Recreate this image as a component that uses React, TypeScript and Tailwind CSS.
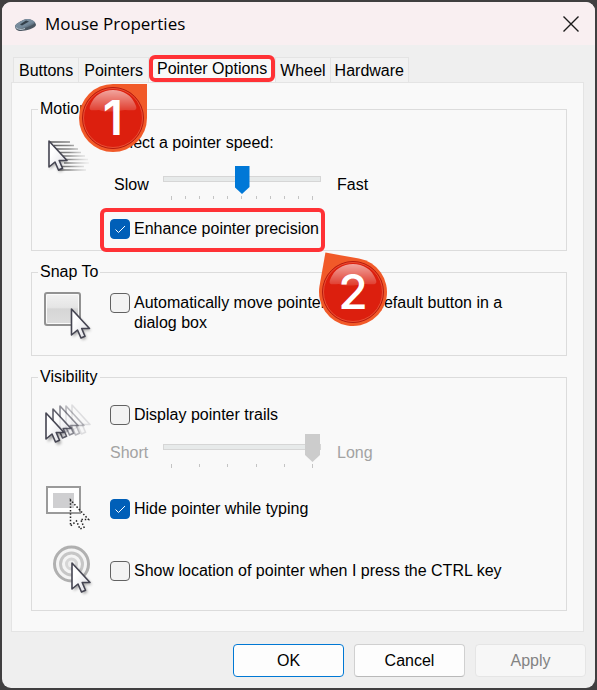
import { useState } from "react";
import type { ReactNode } from "react";
import clsx from "clsx";

const ARROW = "M0 0V26L6 21L9.5 29L13.5 27.3L10.2 19.5H18Z";

const Arrow = ({ x, y, opacity = 1 }: { x: number; y: number; opacity?: number }) => (
  <g transform={`translate(${x} ${y})`} opacity={opacity}>
    <path d={ARROW} fill="url(#arrowFill)" stroke="#454552" strokeWidth="1.6" strokeLinejoin="round" />
  </g>
);

const ArrowShadow = ({ x, y }: { x: number; y: number }) => (
  <path d={ARROW} transform={`translate(${x + 2} ${y + 2})`} fill="#000" opacity="0.35" filter="url(#soft)" />
);

const Icon = ({ children }: { children: ReactNode }) => (
  <svg className="ml-3 h-12 w-12 overflow-visible" viewBox="0 0 48 48" aria-hidden="true">
    {children}
  </svg>
);

const SharedDefs = () => (
  <svg className="absolute h-0 w-0" aria-hidden="true">
    <defs>
      <linearGradient id="arrowFill" x1="0" y1="0" x2="1" y2="1">
        <stop offset="0.3" stopColor="#fff" />
        <stop offset="1" stopColor="#dcdce2" />
      </linearGradient>
      <linearGradient id="buttonFill" x1="0" y1="0" x2="0" y2="1">
        <stop offset="0" stopColor="#f2f2f2" />
        <stop offset="0.45" stopColor="#e5e5e5" />
        <stop offset="0.5" stopColor="#d6d6d6" />
        <stop offset="1" stopColor="#dedede" />
      </linearGradient>
      <linearGradient id="speedFade" gradientUnits="userSpaceOnUse" x1="4" y1="0" x2="46" y2="0">
        <stop offset="0" stopColor="#555" />
        <stop offset="0.5" stopColor="#8a8a8a" />
        <stop offset="1" stopColor="#ddd" stopOpacity="0.3" />
      </linearGradient>
      <linearGradient id="gloss" x1="0" y1="0" x2="0" y2="1">
        <stop offset="0" stopColor="#fff" stopOpacity="0.6" />
        <stop offset="1" stopColor="#fff" stopOpacity="0.12" />
      </linearGradient>
      <linearGradient id="mouseFill" x1="0" y1="0" x2="1" y2="1">
        <stop offset="0" stopColor="#8295a5" />
        <stop offset="0.6" stopColor="#74899a" />
        <stop offset="1" stopColor="#2c353d" />
      </linearGradient>
      <filter id="soft" x="-30%" y="-30%" width="160%" height="160%">
        <feGaussianBlur stdDeviation="1.5" />
      </filter>
    </defs>
  </svg>
);

const MouseIcon = () => (
  <svg className="h-4 w-6" viewBox="0 0 24 16" aria-hidden="true">
    <path d="M2 10C2 8 11 3 14 3C18 3 23 6 23 9C23 12 12 15 8 15C4 15 2 13 2 10Z" fill="#4a5661" />
    <path d="M2 10C2 8 11 3 14 3C18 3 22 5 22 7C20 9 14 12 9 12.500C5 13 2 12 2 10Z" fill="url(#mouseFill)" />
    <path d="M7 8.500L13 4.500L16 5.500L9 9.500Z" fill="#34404a" />
    <path d="M3 11.500C5 14 9 13.500 12 12.500" fill="none" stroke="#b4c2cc" strokeWidth="1.200" />
  </svg>
);

const SpeedIcon = () => (
  <Icon>
    {[
      [5, 26],
      [10, 30],
      [12, 34],
      [14, 37],
      [17, 41],
      [21, 44],
      [20, 45],
      [18, 40],
      [14, 42],
    ].map(([from, to], i) => (
      <path key={i} d={`M${from} ${9 + i * 3.5}H${to}`} stroke="url(#speedFade)" strokeWidth="1.3" />
    ))}
    <ArrowShadow x={4} y={8} />
    <Arrow x={5} y={8} />
  </Icon>
);

const SnapIcon = () => (
  <Icon>
    <rect x="1" y="1" width="35" height="32" rx="2" fill="url(#buttonFill)" stroke="#929292" strokeWidth="2" />
    <rect x="2.500" y="2.500" width="32" height="29" rx="1" fill="none" stroke="#fafafa" />
    <ArrowShadow x={27} y={17} />
    <Arrow x={27.5} y={17} />
  </Icon>
);

const TrailsIcon = () => (
  <Icon>
    <Arrow x={28} y={2} opacity={0.15} />
    <Arrow x={22} y={3} opacity={0.35} />
    <Arrow x={16} y={3} opacity={0.6} />
    <Arrow x={9} y={6} opacity={0.85} />
    <ArrowShadow x={2} y={11} />
    <Arrow x={2} y={10} />
  </Icon>
);

const TypingIcon = () => (
  <Icon>
    <rect x="3" y="2" width="33" height="26" fill="#fff" stroke="#9a9a9a" strokeWidth="2" />
    <rect x="9" y="8" width="21" height="15" fill="#cfcfd1" />
    <path
      d={ARROW}
      transform="translate(26.500 15)"
      fill="none"
      stroke="#222"
      strokeWidth="1.5"
      strokeDasharray="1.500 1.800"
    />
  </Icon>
);

const LocateIcon = () => (
  <Icon>
    <circle cx="27.500" cy="17" r="17" fill="#f4f4f4" stroke="#b0b0b0" strokeWidth="3" />
    <circle cx="27.500" cy="17" r="11" fill="none" stroke="#c6c6c6" strokeWidth="3" />
    <circle cx="27.500" cy="17" r="5" fill="#eee" stroke="#d6d6d6" strokeWidth="3" />
    <ArrowShadow x={28} y={16} />
    <Arrow x={28} y={16} />
  </Icon>
);

interface CheckProps {
  id: string;
  label: string;
  defaultChecked?: boolean;
  highlighted?: boolean;
}

const Check = ({ id, label, defaultChecked, highlighted }: CheckProps) => (
  <div className="relative flex w-fit items-start gap-1">
    <span className="relative h-5 w-5 shrink-0">
      <input
        id={id}
        type="checkbox"
        defaultChecked={defaultChecked}
        className="peer block h-5 w-5 appearance-none rounded border border-[#626262] bg-[#f3f3f3] checked:border-[#005fb8] checked:bg-[#005fb8]"
      />
      <svg
        className="pointer-events-none absolute inset-0 hidden h-5 w-5 peer-checked:block"
        viewBox="0 0 20 20"
        fill="none"
        stroke="#fff"
        aria-hidden="true"
      >
        <path d="M5.500 10.500L8.500 13.500L15 7" />
      </svg>
    </span>
    <label htmlFor={id} className="max-w-[380px]">
      {label}
    </label>
    {highlighted && (
      <span className="pointer-events-none absolute -top-[11px] -right-1.5 -bottom-[13px] -left-2.5 rounded-md border-4 border-[#ff3236]" />
    )}
  </div>
);

interface SpeedSliderProps {
  label: string;
  from: string;
  to: string;
  max: number;
  value: number;
  disabled?: boolean;
  className?: string;
}

const SpeedSlider = ({ label, from, to, max, value, disabled, className }: SpeedSliderProps) => (
  <div className={clsx("flex h-[37px] items-center", disabled && "text-[#a3a3a3]")}>
    <span className={clsx("w-[53px]", className)}>{from}</span>
    <div className="w-[158px] self-start">
      <input
        type="range"
        aria-label={label}
        min={0}
        max={max}
        defaultValue={value}
        disabled={disabled}
        className="block h-[26px] w-full appearance-none bg-transparent [&::-webkit-slider-runnable-track]:h-1.5 [&::-webkit-slider-runnable-track]:border [&::-webkit-slider-runnable-track]:border-[#d6d6d6] [&::-webkit-slider-runnable-track]:bg-[#e7eaea] [&::-webkit-slider-thumb]:-mt-[11px] [&::-webkit-slider-thumb]:h-7 [&::-webkit-slider-thumb]:w-[15px] [&::-webkit-slider-thumb]:appearance-none [&::-webkit-slider-thumb]:bg-[#0078d7] [&::-webkit-slider-thumb]:[clip-path:polygon(0_0,100%_0,100%_75%,50%_100%,0_75%)] disabled:[&::-webkit-slider-thumb]:bg-[#cccccc]"
      />
      <div className="mt-1 flex justify-between pr-2 pl-2" aria-hidden="true">
        {Array.from({ length: max + 1 }, (_, i) => (
          <span key={i} className={clsx("w-px bg-[#c4c4c4]", i === 0 || i === max ? "h-1" : "h-[3px]")} />
        ))}
      </div>
    </div>
    <span className="ml-4">{to}</span>
  </div>
);

const Group = ({ title, className, children }: { title: string; className?: string; children: ReactNode }) => (
  <fieldset className="border border-[#dcdcdc]">
    <legend className="ml-1.5 px-0.5">{title}</legend>
    <div className={clsx("flex flex-col", className)}>{children}</div>
  </fieldset>
);

const Row = ({ icon, className, children }: { icon: ReactNode; className?: string; children: ReactNode }) => (
  <div className={clsx("grid grid-cols-[78px_1fr]", className)}>
    {icon}
    <div>{children}</div>
  </div>
);

// Numbered pin: a teardrop whose tip starts at the top right and turns with `turn`.
const Pin = ({ step, turn, className }: { step: number; turn: number; className: string }) => (
  <div
    className={clsx(
      "pointer-events-none absolute flex h-[68px] w-[68px] items-center justify-center font-['Inter',sans-serif] text-5xl text-white",
      className
    )}
  >
    <svg className="absolute inset-0 h-full w-full overflow-visible" viewBox="0 0 68 68" aria-hidden="true">
      <path d="M34 0H68V34A34 34 0 1 1 34 0Z" fill="#f15a29" transform={`rotate(${turn} 34 34)`} />
      <circle cx="34" cy="34" r="30.500" fill="#dc1f0e" stroke="#b51c10" />
      <circle cx="34" cy="34" r="29.500" fill="none" stroke="#f0704f" strokeWidth="0.600" />
      <path d="M11 22C15 11 24 6 34 6C44 6 53 11 57 22C59 28 52 26 46 26C38 27 28 29 20 26C15 26 9 28 11 22Z" fill="url(#gloss)" />
    </svg>
    <span className="relative">{step}</span>
  </div>
);

const tabs = [
  { name: "Buttons", padding: "px-[5px]" },
  { name: "Pointers", padding: "px-[5px]" },
  { name: "Pointer Options", padding: "px-2" },
  { name: "Wheel", padding: "px-1" },
  { name: "Hardware", padding: "px-1" },
];

const App = () => {
  const [active, setActive] = useState("Pointer Options");

  return (
    <div className="flex min-h-screen flex-col bg-[#403f40] p-0.5 font-['Liberation_Sans',Arial,sans-serif] text-base leading-5 text-black">
      <SharedDefs />
      <main className="relative flex grow flex-col overflow-hidden rounded-[9px] bg-[#efefef]">
        <header className="flex h-[43px] items-center bg-[#f9eff1] pr-4 pl-[11px]">
          <MouseIcon />
          <h1 className="ml-2 grow font-['Open_Sans','Noto_Sans',sans-serif] text-[17px]">Mouse Properties</h1>
          <button type="button" aria-label="Close">
            <svg className="h-4 w-4" viewBox="0 0 16 16" fill="none" stroke="#1a1a1a" strokeWidth="1.400" aria-hidden="true">
              <path d="M0.500 0.500L15.500 15.500M15.500 0.500L0.500 15.500" />
            </svg>
          </button>
        </header>

        <div role="tablist" className="mt-3 mr-3 ml-[11px] flex h-[25px]">
          {tabs.map(({ name, padding }) => (
            <button
              key={name}
              type="button"
              role="tab"
              aria-selected={name === active}
              onClick={() => setActive(name)}
              className={clsx(
                "relative border-t border-r border-[#e4e4e4] first:border-l",
                padding,
                name === active ? "bg-[#f9f9f9] pb-0.5" : "bg-[#f2f2f2] pt-0.5"
              )}
            >
              {name}
              {name === "Pointer Options" && (
                <span className="pointer-events-none absolute -top-[3px] right-0 bottom-0 left-0 rounded-md border-4 border-[#ff3236]" />
              )}
            </button>
          ))}
        </div>

        <section className="mr-[11px] ml-[9px] flex flex-col gap-[11px] border border-[#e4e4e4] bg-[#f9f9f9] pt-4 pr-4 pb-5 pl-[19px]">
          <Group title="Motion" className="pt-3.5 pb-[11px]">
            <Row icon={<SpeedIcon />}>
              <p>Select a pointer speed:</p>
              <div className="mt-[13px] mb-4">
                <SpeedSlider label="Pointer speed" from="Slow" to="Fast" max={10} value={5} className="pl-1" />
              </div>
              <Check id="precision" label="Enhance pointer precision" defaultChecked highlighted />
            </Row>
          </Group>

          <Group title="Snap To" className="pt-2.5 pb-[15px]">
            <Row icon={<SnapIcon />}>
              <div className="mt-px">
                <Check id="snap" label="Automatically move pointer to the default button in a dialog box" />
              </div>
            </Row>
          </Group>

          <Group title="Visibility" className="gap-3.5 pt-4 pb-[15px]">
            <Row icon={<TrailsIcon />}>
              <div className="mt-0.5 mb-[9px]">
                <Check id="trails" label="Display pointer trails" />
              </div>
              <SpeedSlider label="Trail length" from="Short" to="Long" max={5} value={5} disabled />
            </Row>
            <Row icon={<TypingIcon />} className="items-center">
              <Check id="typing" label="Hide pointer while typing" defaultChecked />
            </Row>
            <Row icon={<LocateIcon />} className="items-center">
              <Check id="locate" label="Show location of pointer when I press the CTRL key" />
            </Row>
          </Group>
        </section>

        <footer className="mt-3 mr-[9px] mb-[11px] flex justify-end gap-2.5">
          <button type="button" className="h-[33px] w-[111px] rounded border border-[#0078d4] bg-[#fdfdfd]">
            OK
          </button>
          <button type="button" className="h-[33px] w-[111px] rounded border border-[#d0d0d0] border-b-[#b9b9b9] bg-[#fdfdfd]">
            Cancel
          </button>
          <button type="button" disabled className="h-[33px] w-[111px] rounded border border-[#e5e5e5] bg-[#f7f7f7] text-[#838383]">
            Apply
          </button>
        </footer>

        <Pin step={1} turn={0} className="top-[82px] left-[77px] font-semibold" />
        <Pin step={2} turn={-80} className="top-64 left-[317px] font-medium" />
      </main>
    </div>
  );
};

export default App;
